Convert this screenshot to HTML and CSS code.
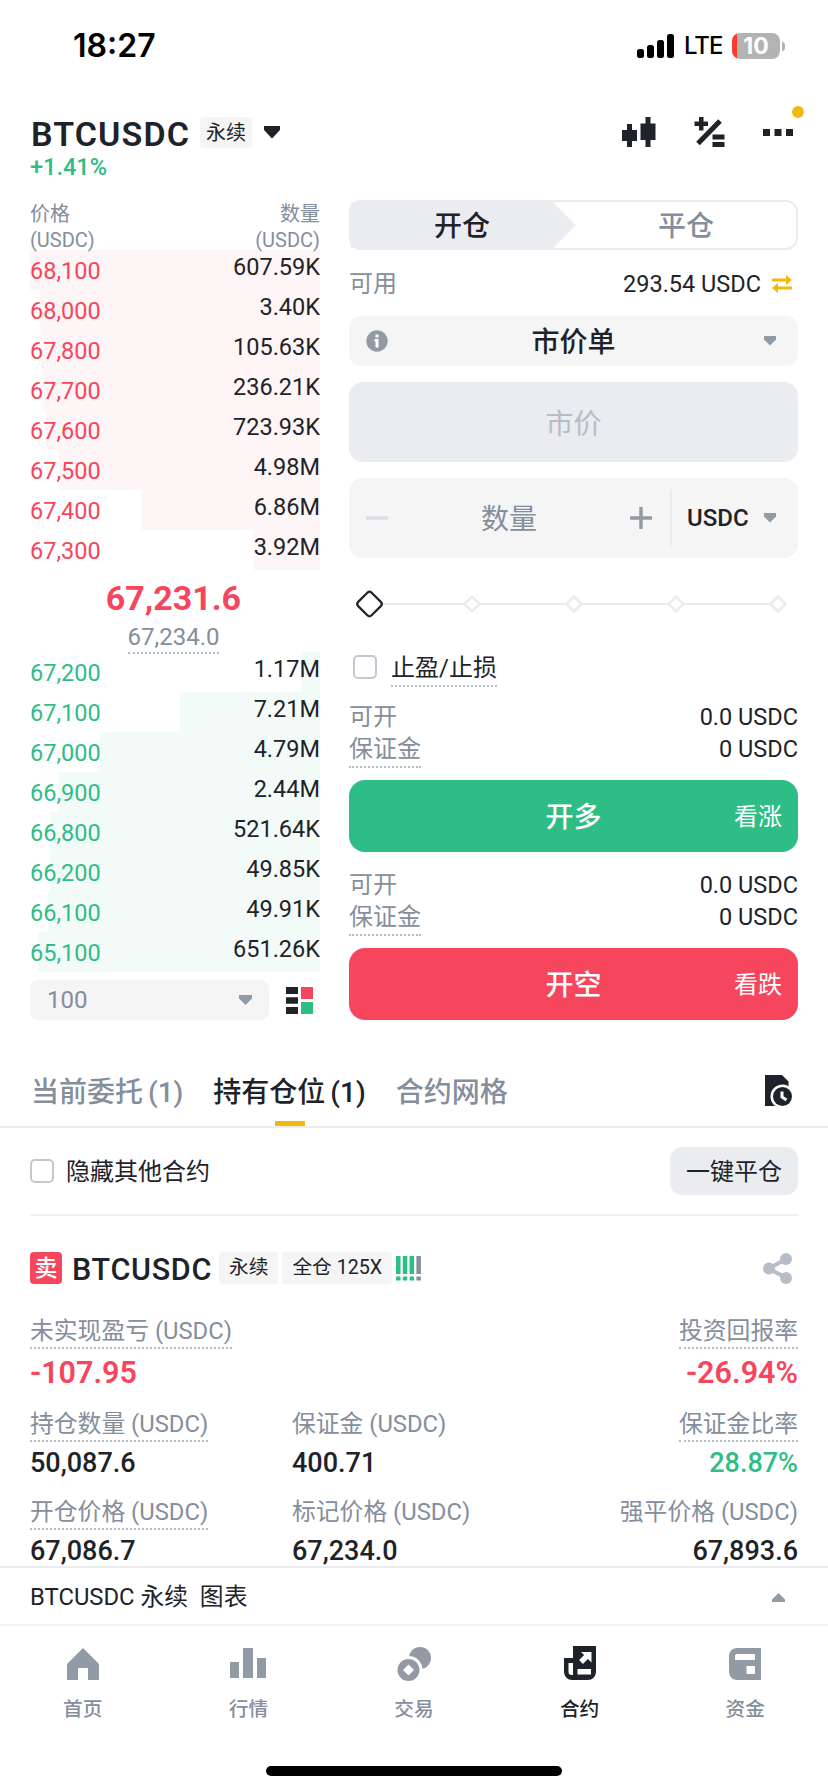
FILE: index.html
```html
<!DOCTYPE html>
<html lang="zh-CN">
  <head>
    <meta charset="utf-8">
    <title>BTCUSDC 永续</title>
    <link rel="stylesheet" href="styles.css">
  </head>
  <body>
    <div class="status-bar">
      <span class="clock">18:27</span>
      <div class="status-right">
        <svg class="signal" width="38" height="24" viewBox="0 0 38 24">
          <rect x="0" y="15" width="7" height="9" rx="2.5"/>
          <rect x="10" y="11" width="7" height="13" rx="2.5"/>
          <rect x="20" y="6" width="7" height="18" rx="2.5"/>
          <rect x="30" y="0" width="7" height="24" rx="2.5"/>
        </svg>
        <span class="lte">LTE</span>
        <div class="battery">10</div>
        <div class="battery-nub"></div>
      </div>
    </div>

    <header class="header">
      <div class="pair">
        <h1>BTCUSDC</h1>
        <span class="tag">永续</span>
        <svg class="pair-arrow" width="16" height="13" viewBox="0 0 16 13"><path d="M0 0h16v4L8 12.500 0 4z" fill="#1e2329"/></svg>
      </div>
      <div class="header-icons">
        <svg width="34" height="30" viewBox="0 0 34 30" fill="#1e2329"><path d="M5 7h5v6h5v11h-5v6H5v-6H0V13h5zM23.500 0h5v6.500h5V23h-5v7h-5v-7h-5V6.500h5z"/></svg>
        <svg width="31" height="30" viewBox="0 0 31 30" fill="#1e2329"><path d="M5 0h4.500v4.500H14V9H9.500v4.500H5V9H.500V4.500H5zM18.500 17.500h12v5h-12zM18.500 25h12v5h-12z"/><path d="M4 26.500L26 4" stroke="#1e2329" stroke-width="5"/></svg>
        <svg width="30" height="30" viewBox="0 0 30 30" fill="#1e2329"><path d="M0 12h7v7H0zM11.500 12h7v7h-7zM23 12h7v7h-7z"/></svg>
        <i class="notice-dot"></i>
      </div>
    </header>
    <div class="change">+1.41%</div>

    <main class="trade">
      <section class="book">
        <div class="book-head">
          <span>价格<br>(USDC)</span>
          <span class="right">数量<br>(USDC)</span>
        </div>
        <ul class="depth asks">
          <li style="--depth: 290px"><b>68,100</b><span>607.59K</span></li>
          <li style="--depth: 280px"><b>68,000</b><span>3.40K</span></li>
          <li style="--depth: 279px"><b>67,800</b><span>105.63K</span></li>
          <li style="--depth: 277px"><b>67,700</b><span>236.21K</span></li>
          <li style="--depth: 274px"><b>67,600</b><span>723.93K</span></li>
          <li style="--depth: 261px"><b>67,500</b><span>4.98M</span></li>
          <li style="--depth: 179px"><b>67,400</b><span>6.86M</span></li>
          <li style="--depth: 66px"><b>67,300</b><span>3.92M</span></li>
        </ul>
        <div class="last">
          <strong>67,231.6</strong>
          <span class="dotted">67,234.0</span>
        </div>
        <ul class="depth bids">
          <li style="--depth: 19px"><b>67,200</b><span>1.17M</span></li>
          <li style="--depth: 140px"><b>67,100</b><span>7.21M</span></li>
          <li style="--depth: 220px"><b>67,000</b><span>4.79M</span></li>
          <li style="--depth: 261px"><b>66,900</b><span>2.44M</span></li>
          <li style="--depth: 269px"><b>66,800</b><span>521.64K</span></li>
          <li style="--depth: 270px"><b>66,200</b><span>49.85K</span></li>
          <li style="--depth: 272px"><b>66,100</b><span>49.91K</span></li>
          <li style="--depth: 282px"><b>65,100</b><span>651.26K</span></li>
        </ul>
        <div class="book-foot">
          <div class="step">100<svg width="13" height="10" viewBox="0 0 13 10"><path d="M0 0h13v3.500L6.500 10 0 3.500z" fill="#929aa5"/></svg></div>
          <svg width="27" height="27" viewBox="0 0 27 27">
            <path d="M0 0h12v7H0zM0 10.200h12v6.500H0zM0 20h12v7H0z" fill="#1e2329"/>
            <path d="M15 0h12v12H15z" fill="#f6465d"/>
            <path d="M15 15h12v12H15z" fill="#2ebd85"/>
          </svg>
        </div>
      </section>

      <section class="order">
        <div class="side-switch">
          <span class="open">开仓</span>
          <span class="close">平仓</span>
        </div>
        <div class="available">
          <span class="muted">可用</span>
          <span class="amount">293.54 USDC</span>
          <svg width="20" height="18" viewBox="0 0 20 18" fill="#f0b90b"><path d="M0 3.500h14V0l6 5-6 5V6.500H0zM20 11.500H6V8l-6 5 6 5v-3.500h14z"/></svg>
        </div>
        <div class="order-type">
          <svg width="22" height="22" viewBox="0 0 22 22"><circle cx="11" cy="11" r="10.700" fill="#929aa5"/><path d="M9.500 4.500h3v3h-3zM8.500 9h4v8.500h-3v-6h-1z" fill="#fff"/></svg>
          <span>市价单</span>
          <svg width="12" height="10" viewBox="0 0 12 10"><path d="M0 0h12v3.500L6 9.500 0 3.500z" fill="#929aa5"/></svg>
        </div>
        <div class="price-input">市价</div>
        <div class="qty">
          <svg width="22" height="22" viewBox="0 0 22 22"><path d="M0 11h22" stroke="#dadde3" stroke-width="3.500"/></svg>
          <span class="qty-name">数量</span>
          <svg width="22" height="22" viewBox="0 0 22 22"><path d="M0 11h22M11 0v22" stroke="#929aa5" stroke-width="3.500"/></svg>
          <div class="unit">USDC<svg width="12" height="10" viewBox="0 0 12 10"><path d="M0 0h12v3.500L6 9.500 0 3.500z" fill="#929aa5"/></svg></div>
        </div>
        <svg class="slider" width="449" height="30" viewBox="0 0 449 30" stroke-linejoin="round">
          <path d="M34 15h388" stroke="#eaecef" stroke-width="2"/>
          <g fill="#fff" stroke="#eaecef" stroke-width="2.500">
            <path d="M123 7.500l7.500 7.500-7.500 7.500-7.500-7.500zM225 7.500l7.500 7.500-7.500 7.500-7.500-7.500zM327 7.500l7.500 7.500-7.500 7.500-7.500-7.500zM429 7.500l7.500 7.500-7.500 7.500-7.500-7.500z"/>
          </g>
          <rect x="11" y="5.500" width="19" height="19" rx="3" transform="rotate(45 20.500 15)" fill="#fff" stroke="#1e2329" stroke-width="2.200"/>
        </svg>
        <div class="tpsl">
          <i class="checkbox"></i>
          <span class="dotted">止盈/止损</span>
        </div>
        <div class="limits">
          <div class="line"><span class="muted">可开</span><span>0.0 USDC</span></div>
          <div class="line"><span class="muted dotted">保证金</span><span>0 USDC</span></div>
        </div>
        <div class="action long"><span>开多</span><small>看涨</small></div>
        <div class="limits second">
          <div class="line"><span class="muted">可开</span><span>0.0 USDC</span></div>
          <div class="line"><span class="muted dotted">保证金</span><span>0 USDC</span></div>
        </div>
        <div class="action short"><span>开空</span><small>看跌</small></div>
      </section>
    </main>

    <nav class="tabs">
      <span>当前委托 (1)</span>
      <span class="active">持有仓位 (1)</span>
      <span>合约网格</span>
      <svg width="28" height="32" viewBox="0 0 28 32">
        <path d="M0 0h17l6.500 6.500V31H0z" fill="#1e2329"/>
        <circle cx="17.500" cy="21.500" r="12" fill="#fff"/>
        <circle cx="17.500" cy="21.500" r="9.500" fill="#1e2329"/>
        <path d="M17 16.500v5.500l4.500 3" fill="none" stroke="#fff" stroke-width="3"/>
      </svg>
    </nav>

    <div class="filter">
      <i class="checkbox"></i>
      <span>隐藏其他合约</span>
      <div class="close-all">一键平仓</div>
    </div>

    <section class="position">
      <div class="position-head">
        <span class="sell">卖</span>
        <h2>BTCUSDC</h2>
        <span class="tag">永续</span>
        <span class="tag">全仓 125X</span>
        <svg width="26" height="25" viewBox="0 0 26 25" fill="#2ebd85">
          <path d="M0 0h4.500v18H0zM0 20.500h4.500v4H0zM6.800 0h4.500v18H6.800zM6.800 20.500h4.500v4H6.800zM13.600 0h4.500v18h-4.500zM13.600 20.500h4.500v4h-4.500z"/>
          <path d="M20.400 0h4.500v18h-4.500zM20.400 20.500h4.500v4h-4.500z" fill="#848e9c"/>
        </svg>
        <svg class="share" width="29" height="31" viewBox="0 0 29 31" fill="#b7bdc6">
          <path d="M23 6L6 15.500 23 25" fill="none" stroke="#b7bdc6" stroke-width="4"/>
          <circle cx="6" cy="15.500" r="6"/><circle cx="23" cy="6" r="6"/><circle cx="23" cy="25" r="6"/>
        </svg>
      </div>
      <div class="stats pnl">
        <div><label class="dotted">未实现盈亏 (USDC)</label><strong>-107.95</strong></div>
        <div class="right"><label class="dotted">投资回报率</label><strong>-26.94%</strong></div>
      </div>
      <div class="stats">
        <div><label class="dotted">持仓数量 (USDC)</label><b>50,087.6</b></div>
        <div><label>保证金 (USDC)</label><b>400.71</b></div>
        <div class="right"><label class="dotted">保证金比率</label><b class="green">28.87%</b></div>
      </div>
      <div class="stats">
        <div><label class="dotted">开仓价格 (USDC)</label><b>67,086.7</b></div>
        <div><label>标记价格 (USDC)</label><b>67,234.0</b></div>
        <div class="right"><label>强平价格 (USDC)</label><b>67,893.6</b></div>
      </div>
    </section>

    <div class="chart-bar">
      <span>BTCUSDC 永续&nbsp; 图表</span>
      <svg width="13" height="9" viewBox="0 0 13 9"><path d="M0 9V6.500L6.500 0 13 6.500V9z" fill="#929aa5"/></svg>
    </div>

    <footer class="bottom-nav">
      <a>
        <svg width="36" height="36" viewBox="0 0 36 36"><path d="M18 2l16 16v16H23V22H13v12H2V18z"/></svg>
        首页
      </a>
      <a>
        <svg width="36" height="36" viewBox="0 0 36 36"><path d="M0 16h9v16H0zM13 2h10v30H13zM27 12h9v20h-9z"/></svg>
        行情
      </a>
      <a>
        <svg width="36" height="36" viewBox="0 0 36 36">
          <circle cx="24" cy="12" r="11"/>
          <circle cx="12.500" cy="24" r="14" fill="#fff"/>
          <circle cx="12.500" cy="24" r="11"/>
          <path d="M12.500 18.500L18 24l-5.500 5.500L7 24z" fill="#fff"/>
        </svg>
        交易
      </a>
      <a class="active">
        <svg width="36" height="36" viewBox="0 0 36 36">
          <path d="M11 0h23v26a8 8 0 0 1-8 8H10a8 8 0 0 1-8-8V12h9z"/>
          <path d="M6.500 17H11v12H9.500a3 3 0 0 1-3-3zM15.500 23h13.500v5.500H15.500zM19 6h10.500v10.500l-3.600-3.600-5 5-3.800-3.800 5-5z" fill="#fff"/>
        </svg>
        合约
      </a>
      <a>
        <svg width="36" height="36" viewBox="0 0 36 36">
          <path d="M10 2h24v32H10a8 8 0 0 1-8-8V10a8 8 0 0 1 8-8z"/>
          <path d="M10 8h18v6H8v-4a2 2 0 0 1 2-2zM19.500 20H28v8h-8.500z" fill="#fff"/>
        </svg>
        资金
      </a>
    </footer>
    <div class="home-indicator"></div>
  </body>
</html>
```
FILE: styles.css
```css
* {
  box-sizing: border-box;
}
body {
  margin: 0;
  width: 828px;
  height: 1792px;
  overflow: hidden;
  background: #fff;
  color: #1e2329;
  font-family: Roboto, "Noto Sans CJK SC", sans-serif;
  font-size: 24px;
  line-height: 32px;
}
h1, h2, ul {
  margin: 0;
  padding: 0;
}
svg {
  display: block;
  flex: none;
}
.right {
  text-align: right;
}
.muted {
  color: #848e9c;
}
.green {
  color: #2ebd85;
}
.dotted {
  border-bottom: 2px dotted #b7bdc6;
}
.tag {
  padding: 0 6px;
  border-radius: 4px;
  background: #f5f5f5;
  font-size: 20px;
  line-height: 32px;
}
.checkbox {
  width: 24px;
  height: 24px;
  border: 2px solid #c3c8d0;
  border-radius: 5px;
}

/* status bar */
.status-bar {
  display: flex;
  justify-content: space-between;
  align-items: center;
  height: 92px;
  padding: 0 43px 0 73px;
  color: #000;
  font-family: Inter, sans-serif;
}
.clock {
  font-size: 32px;
  font-weight: 600;
}
.status-right {
  display: flex;
  align-items: center;
}
.lte {
  margin-left: 9px;
  width: 38px;
  font-size: 24px;
  font-weight: 500;
  letter-spacing: -1px;
}
.battery {
  width: 48px;
  height: 26px;
  margin-left: 10px;
  border-radius: 8px;
  background: linear-gradient(90deg, #ff3b30 5px, #b3b3b3 5px);
  color: #fff;
  font-size: 23px;
  font-weight: 700;
  line-height: 26px;
  text-align: center;
}
.battery-nub {
  width: 3px;
  height: 9px;
  margin-left: 2px;
  border-radius: 0 3px 3px 0;
  background: #b3b3b3;
}

/* header */
.header {
  display: flex;
  justify-content: space-between;
  height: 60px;
  padding: 25px 35px 0 31px;
}
.pair {
  display: flex;
  height: 31px;
}
.pair h1 {
  width: 169px;
  font-size: 34px;
  font-weight: 600;
  line-height: 35px;
  letter-spacing: 1.100px;
}
.pair-arrow {
  margin: 9px 0 0 12px;
}
.header-icons {
  position: relative;
  display: flex;
  gap: 38px;
}
.notice-dot {
  position: absolute;
  right: -11px;
  top: -11px;
  width: 12px;
  height: 12px;
  border-radius: 50%;
  background: #f0b90b;
}
.change {
  height: 48px;
  padding-left: 30px;
  color: #2ebd85;
  font-size: 23.500px;
  font-weight: 500;
  line-height: 30px;
}

/* order book */
.trade {
  display: grid;
  grid-template-columns: 290px 449px;
  gap: 29px;
  height: 820px;
  padding: 0 30px;
}
.book-head {
  display: flex;
  justify-content: space-between;
  height: 50px;
  padding-top: 1px;
  color: #848e9c;
  font-size: 20px;
  line-height: 26px;
}
.depth {
  list-style: none;
}
.depth li {
  display: flex;
  justify-content: space-between;
  height: 40px;
  font-size: 23.500px;
  line-height: 42px;
  background: linear-gradient(var(--bar), var(--bar)) right / var(--depth) 100% no-repeat;
}
.depth b {
  font-weight: 400;
}
.depth span {
  line-height: 34px;
}
.asks {
  --bar: #fef5f6;
}
.asks b {
  color: #f6465d;
}
.bids {
  --bar: #f3fbf8;
}
.bids b {
  color: #2ebd85;
}
.last {
  display: flex;
  flex-direction: column;
  align-items: center;
  height: 82px;
  padding: 10px 3px 0 0;
}
.last strong {
  color: #f6465d;
  font-size: 34px;
  line-height: 36px;
}
.last span {
  height: 38px;
  color: #848e9c;
  line-height: 43px;
}
.book-foot {
  display: flex;
  align-items: center;
  margin-top: 8px;
}
.step {
  display: flex;
  justify-content: space-between;
  align-items: center;
  width: 239px;
  height: 40px;
  margin-right: 17px;
  padding: 0 17px;
  border-radius: 8px;
  background: #f5f5f5;
  color: #848e9c;
  line-height: 42px;
}

/* order form */
.side-switch {
  display: grid;
  grid-template-columns: 225px 1fr;
  height: 50px;
  border: 2px solid #eaecef;
  border-radius: 12px;
  font-size: 28px;
  font-weight: 500;
  line-height: 50px;
  text-align: center;
}
.side-switch .open {
  height: 46px;
  padding-right: 3px;
  background: #eaecef;
  clip-path: polygon(0 0, 202px 0, 100% 50%, 202px 100%, 0 100%);
}
.side-switch .close {
  color: #848e9c;
}
.available {
  display: flex;
  align-items: center;
  height: 66px;
  padding: 2px 6px 0 0;
}
.available .amount {
  margin: 0 11px 0 auto;
  font-size: 23.500px;
}
.order-type {
  display: flex;
  justify-content: space-between;
  align-items: center;
  height: 50px;
  padding: 0 22px 0 17px;
  border-radius: 12px;
  background: #f5f5f5;
  font-size: 28px;
  font-weight: 500;
}
.order-type span {
  padding: 3px 5px 0 0;
}
.price-input {
  height: 80px;
  margin-top: 16px;
  border-radius: 14px;
  background: #eaecef;
  color: #b7bdc6;
  font-size: 28px;
  line-height: 86px;
  text-align: center;
}
.qty {
  display: flex;
  align-items: center;
  height: 80px;
  margin-top: 16px;
  padding-left: 17px;
  border-radius: 14px;
  background: #f5f5f5;
}
.qty-name {
  flex: 1;
  padding-top: 4px;
  color: #848e9c;
  font-size: 28px;
  text-align: center;
}
.unit {
  display: flex;
  justify-content: space-between;
  align-items: center;
  width: 128px;
  height: 56px;
  margin-left: 18px;
  padding: 0 22px 0 15px;
  border-left: 2px solid #eaecef;
  font-weight: 500;
  line-height: 34px;
}
.slider {
  margin-top: 31px;
}
.tpsl {
  display: flex;
  height: 79px;
  padding: 36px 0 0 4px;
}
.tpsl span {
  height: 32px;
  margin-left: 14px;
  line-height: 26px;
}
.limits {
  height: 82px;
}
.limits.second {
  height: 96px;
  padding-top: 14px;
}
.line {
  display: flex;
  justify-content: space-between;
  height: 32px;
  line-height: 38px;
}
.line span + span {
  font-size: 23.500px;
}
.line .dotted {
  height: 38px;
}
.action {
  display: grid;
  grid-template-columns: 1fr auto 1fr;
  height: 72px;
  padding-right: 16px;
  border-radius: 16px;
  color: #fff;
  line-height: 75px;
}
.action span {
  grid-column: 2;
  padding-left: 16px;
  font-size: 28px;
  font-weight: 500;
}
.action small {
  font-size: 24px;
  text-align: right;
}
.long {
  background: #2ebd85;
}
.short {
  background: #f6465d;
}

/* tabs */
.tabs {
  display: flex;
  gap: 30px;
  height: 108px;
  padding: 0 35px 0 31px;
  border-bottom: 2px solid #eaecef;
  color: #848e9c;
  font-size: 28px;
  font-weight: 500;
  line-height: 145px;
  word-spacing: -2px;
}
.tabs .active {
  color: #1e2329;
  background: linear-gradient(#f0b90b, #f0b90b) center bottom / 30px 5px no-repeat;
}
.tabs svg {
  margin: 55px 0 0 auto;
}
.filter {
  display: flex;
  align-items: center;
  height: 88px;
  margin: 0 30px;
  border-bottom: 2px solid #eff0f2;
}
.filter span {
  margin-left: 12px;
  padding-top: 2px;
}
.close-all {
  width: 128px;
  height: 48px;
  margin-left: auto;
  border-radius: 12px;
  background: #eaecef;
  line-height: 50px;
  text-align: center;
}

/* position */
.position {
  height: 350px;
  padding: 36px 30px 0;
  overflow: hidden;
}
.position-head {
  display: flex;
  align-items: center;
  height: 32px;
}
.sell {
  width: 32px;
  height: 32px;
  border-radius: 4px;
  background: #f6465d;
  color: #fff;
  font-size: 23px;
  font-weight: 500;
  line-height: 34px;
  text-align: center;
}
.position-head h2 {
  width: 147px;
  margin-left: 10px;
  padding-top: 3px;
  font-size: 30.500px;
  font-weight: 500;
  line-height: 36px;
  letter-spacing: .700px;
}
.position-head .tag {
  margin-right: 4px;
  padding: 0 10px;
  font-size: 19.700px;
}
.share {
  margin: 0 6px 0 auto;
}
.stats {
  display: grid;
  grid-template-columns: 262px 1fr 1fr;
  height: 88px;
}
.stats.pnl {
  grid-template-columns: 1fr 1fr;
  height: 93px;
  margin-top: 28px;
}
.stats div {
  display: flex;
  flex-direction: column;
  align-items: flex-start;
}
.stats .right {
  align-items: flex-end;
}
.stats label {
  height: 37px;
  color: #848e9c;
  font-size: 23.800px;
  line-height: 38px;
}
.stats b {
  font-size: 27px;
  font-weight: 500;
  line-height: 42px;
}
.stats strong {
  color: #f6465d;
  font-size: 30.500px;
  font-weight: 600;
  line-height: 47px;
}

/* bottom */
.chart-bar {
  display: flex;
  justify-content: space-between;
  align-items: center;
  height: 60px;
  padding: 2px 43px 0 30px;
  border-top: 2px solid #eaecef;
  border-bottom: 2px solid #f2f3f5;
  font-size: 23.800px;
}
.bottom-nav {
  display: grid;
  grid-template-columns: repeat(5, 1fr);
  height: 140px;
  padding-top: 20px;
}
.bottom-nav a {
  display: flex;
  flex-direction: column;
  align-items: center;
  color: #848e9c;
  font-size: 19.700px;
  font-weight: 500;
  line-height: 55px;
}
.bottom-nav svg {
  fill: #929aa5;
}
.bottom-nav .active {
  color: #1e2329;
}
.bottom-nav .active svg {
  fill: #1e2329;
}
.home-indicator {
  width: 296px;
  height: 10px;
  margin: 0 auto;
  border-radius: 5px;
  background: #000;
}
```
